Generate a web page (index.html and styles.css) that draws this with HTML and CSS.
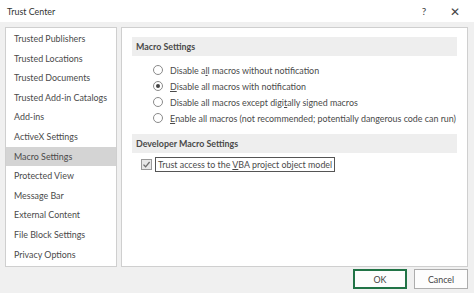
FILE: index.html
```html
<!DOCTYPE html>
<html>
<head>
<meta charset="utf-8">
<link rel="stylesheet" href="styles.css">
</head>
<body>
<div class="dialog">
  <div class="titlebar">
    <span class="title">Trust Center</span>
    <span class="tb-btns"><span class="help">?</span><span class="close">&#x2715;</span></span>
  </div>
  <div class="main">
    <ul class="nav">
      <li>Trusted Publishers</li>
      <li>Trusted Locations</li>
      <li>Trusted Documents</li>
      <li>Trusted Add-in Catalogs</li>
      <li>Add-ins</li>
      <li>ActiveX Settings</li>
      <li class="sel">Macro Settings</li>
      <li>Protected View</li>
      <li>Message Bar</li>
      <li>External Content</li>
      <li>File Block Settings</li>
      <li>Privacy Options</li>
    </ul>
    <div class="content">
      <div class="section-head">Macro Settings</div>
      <div class="radios">
        <div class="row"><span class="radio"></span>Disable a<u>l</u>l macros without notification</div>
        <div class="row"><span class="radio on"></span><u>D</u>isable all macros with notification</div>
        <div class="row"><span class="radio"></span>Disable all macros except digi<u>t</u>ally signed macros</div>
        <div class="row"><span class="radio"></span><u>E</u>nable all macros (not recommended; potentially dangerous code can run)</div>
      </div>
      <div class="section-head dev">Developer Macro Settings</div>
      <div class="checkrow">
        <span class="check"><svg width="9" height="9" viewBox="0 0 9 9"><path d="M1.5 4.6 L3.6 6.8 L7.6 2" fill="none" stroke="#6f6f6f" stroke-width="1.3"/></svg></span>
        <span class="focus">Trust access to the <u>V</u>BA project object model</span>
      </div>
    </div>
  </div>
  <div class="footer">
    <button class="btn ok">OK</button>
    <button class="btn">Cancel</button>
  </div>
</div>
</body>
</html>
```
FILE: styles.css
```css
html, body { margin: 0; padding: 0; }
body {
  width: 474px; height: 293px; overflow: hidden;
  background: #f0f0f0;
  font-family: Lato, "Noto Sans", sans-serif;
  font-size: 8.9px;
  color: #444;
}
.dialog { display: flex; flex-direction: column; height: 293px; }
.titlebar {
  height: 22px; background: #fff;
  display: flex; align-items: center; justify-content: space-between;
  padding: 0 0 0 7px;
  color: #333;
}
.tb-btns { display: flex; align-items: center; }
.help { width: 32px; text-align: center; font-size: 10px; color: #444; }
.close { width: 30px; text-align: center; font-size: 12px; color: #444; padding-right: 4px; }
.main {
  display: flex; gap: 4px;
  padding: 5px 6px 0 5px;
  height: 240px;
}
.nav {
  list-style: none; margin: 0; padding: 1px 0 0 0;
  width: 110px; flex: none; background: #fff; border: 1px solid #cfcfcf;
}
.nav li {
  height: 19.6px; line-height: 19.6px; padding-left: 8px;
  white-space: nowrap; color: #4a4a4a;
}
.nav li.sel { background: #d4d4d4; }
.content {
  flex: 1; min-width: 0; overflow: hidden;
  background: #fff; border: 1px solid #cfcfcf;
  padding: 9px 10px 0 10px;
}
.section-head {
  height: 19px; line-height: 19px; background: #eeeeee;
  padding-left: 4px; font-weight: bold; color: #4a4a4a;
}
.section-head.dev { margin-top: 8px; }
.radios { padding: 6px 0 0 21px; }
.row {
  height: 16px; display: flex; align-items: center; white-space: nowrap; color: #4a4a4a;
}
.radio {
  width: 8px; height: 8px; border: 1px solid #8a8a8a; border-radius: 50%;
  margin-right: 7px; box-sizing: content-box; position: relative; background: #fff; flex: none;
}
.radio.on::after {
  content: ""; position: absolute; left: 2px; top: 2px;
  width: 4px; height: 4px; border-radius: 50%; background: #444;
}
.checkrow { display: flex; align-items: center; padding: 4px 0 0 9px; }
.check {
  width: 9px; height: 9px; border: 1px solid #9a9a9a; background: #e8e8e8;
  display: flex; align-items: center; justify-content: center; margin-right: 3px;
}
.focus {
  border: 1px solid #555; padding: 0 2px; height: 13px; line-height: 13px; white-space: nowrap; color: #4a4a4a;
}
.footer {
  display: flex; justify-content: flex-end; gap: 7px;
  padding: 2px 6px 0 0;
}
.btn {
  width: 54px; height: 20px; margin: 0;
  background: #fdfdfd; border: 1px solid #adadad;
  font-family: Lato, "Noto Sans", sans-serif; font-size: 8.9px; color: #444;
  padding: 0;
}
.btn.ok { border: 2px solid #217346; }
```
